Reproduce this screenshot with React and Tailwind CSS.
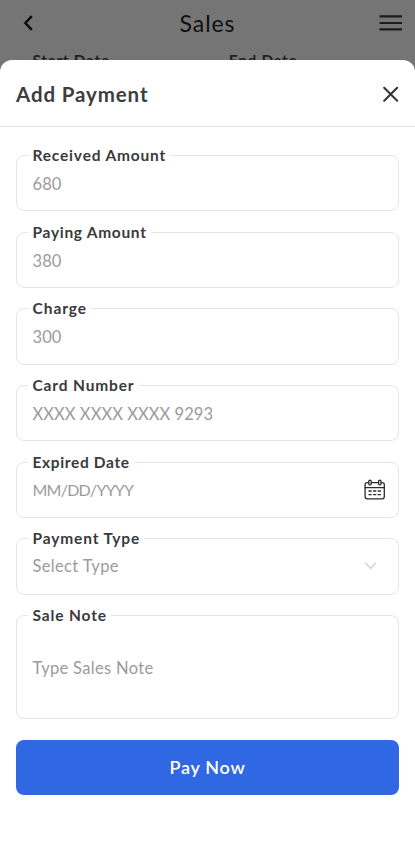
import React from "react";

const fields = [
  { label: "Received Amount", placeholder: "680", labelClass: "tracking-[0.82px]", textClass: "text-[16.5px] tracking-[0.1px]" },
  { label: "Paying Amount", placeholder: "380", labelClass: "tracking-[0.7px]", textClass: "text-[16.5px] tracking-[0.1px]" },
  { label: "Charge", placeholder: "300", labelClass: "tracking-[0.95px]", textClass: "text-[16.5px] tracking-[0.1px]" },
  { label: "Card Number", placeholder: "XXXX XXXX XXXX 9293", labelClass: "tracking-[0.85px]", textClass: "text-[16.5px] tracking-[0.06px]" },
  { label: "Expired Date", placeholder: "MM/DD/YYYY", labelClass: "tracking-[0.64px]", textClass: "text-[16px] tracking-[-0.75px]", icon: "calendar" },
  { label: "Payment Type", placeholder: "Select Type", labelClass: "tracking-[0.85px]", textClass: "text-[16.5px] tracking-[0.35px]", icon: "chevron" },
];

const BackIcon = () => (
  <svg width="12" height="18" viewBox="0 0 12 18" fill="none" stroke="#0c0c0c" strokeWidth="2.5">
    <path d="M9.8 2.2 L3.4 9 L9.8 15.8" />
  </svg>
);

const MenuIcon = () => (
  <svg width="24" height="18" viewBox="0 0 24 18" fill="none" stroke="#1c1c1e" strokeWidth="2.2">
    <path d="M0.5 2.4H23M0.5 9H23M0.5 15.3H23" />
  </svg>
);

const CloseIcon = () => (
  <svg width="16" height="16" viewBox="0 0 16 16" fill="none" stroke="#333335" strokeWidth="2" strokeLinecap="round">
    <path d="M1.2 1.8 L14.2 14.8 M14.2 1.8 L1.2 14.8" />
  </svg>
);

const CalendarIcon = () => (
  <svg width="22" height="22" viewBox="0 0 22 22" fill="none" stroke="#2b2b2b" strokeWidth="1.3" strokeLinecap="round">
    <path d="M4.6 3.6H3.2Q1.1 3.6 1.1 5.7V17.6Q1.1 19.8 3.3 19.8H18.1Q20.3 19.8 20.3 17.6V5.7Q20.3 3.6 18.2 3.6H17.2M7.4 3.6H14.4" />
    <path d="M1.1 8.6H20.3" />
    <rect x="4.8" y="1.1" width="2.4" height="4.8" rx="1.2" />
    <rect x="14.6" y="1.1" width="2.4" height="4.8" rx="1.2" />
    <path d="M5 12H7.2M9.6 12H11.8M14.2 12H16.4M5 15.7H7.2M9.6 15.7H11.8M14.2 15.7H16.4" />
  </svg>
);

const ChevronIcon = () => (
  <svg width="12" height="8" viewBox="0 0 12 8" fill="none" stroke="#dadada" strokeWidth="1.8" strokeLinecap="round">
    <path d="M0.9 1.4 L5.6 6.4 L10.3 1.4" />
  </svg>
);

const FieldLabel = ({ className, children }) => (
  <span
    className={`absolute left-[11px] -top-[11px] bg-white pl-[4.5px] pr-1 text-[15.5px] leading-[20px] font-bold whitespace-nowrap text-[#3a3a3c] ${className}`}
  >
    {children}
  </span>
);

const Field = ({ label, placeholder, labelClass, textClass, icon }) => (
  <div
    className={`relative flex h-[56.4px] items-center justify-between rounded-lg border border-[#e6e6e6] pl-[15.5px] ${
      icon === "chevron" ? "pr-[21px] pb-[1px]" : "pt-[1.4px] pr-3"
    }`}
  >
    <FieldLabel className={labelClass}>{label}</FieldLabel>
    <span className={`leading-[22px] text-[#9b9b9b] ${textClass}`}>{placeholder}</span>
    {icon === "calendar" && <CalendarIcon />}
    {icon === "chevron" && <ChevronIcon />}
  </div>
);

function App() {
  return (
    <div className="h-[865px] w-full overflow-hidden bg-[#757575] font-['Lato',sans-serif]">
      <header className="flex h-[46px] items-center justify-between pr-3 pl-[22px]">
        <BackIcon />
        <h1 className="pl-[2px] text-[23px] leading-[28px] tracking-[0.9px] text-[#0f0f0f]">Sales</h1>
        <MenuIcon />
      </header>

      <div className="grid h-[14px] grid-cols-2 pl-[32.5px] text-[15.5px] leading-[20px] font-bold text-[#1f1f20]">
        <span className="pt-1 tracking-[0.7px]">Start Date</span>
        <span className="pt-1 pl-[5px] tracking-[0.65px]">End Date</span>
      </div>

      <section className="relative h-[805px] rounded-t-xl bg-white">
        <div className="flex h-[67px] items-center justify-between border-b border-[#e2e2e2] px-4 pt-[2px]">
          <h2 className="text-[20.5px] leading-[26px] font-bold tracking-[0.88px] text-[#3d3d3f]">Add Payment</h2>
          <CloseIcon />
        </div>

        <form className="flex flex-col gap-[20.25px] px-4 pt-[28px]">
          {fields.map((field) => (
            <Field key={field.label} {...field} />
          ))}

          <div className="relative flex h-[104.6px] items-center rounded-lg border border-[#e6e6e6] pt-[2px] pl-[15.5px]">
            <FieldLabel className="tracking-[0.86px]">Sale Note</FieldLabel>
            <span className="text-[16.5px] leading-[22px] tracking-[0.32px] text-[#9b9b9b]">Type Sales Note</span>
          </div>

          <button
            type="button"
            className="h-[55px] rounded-lg bg-[#2f68e2] text-[18px] font-semibold tracking-[0.7px] text-white"
          >
            Pay Now
          </button>
        </form>
      </section>
    </div>
  );
}

export default App;
